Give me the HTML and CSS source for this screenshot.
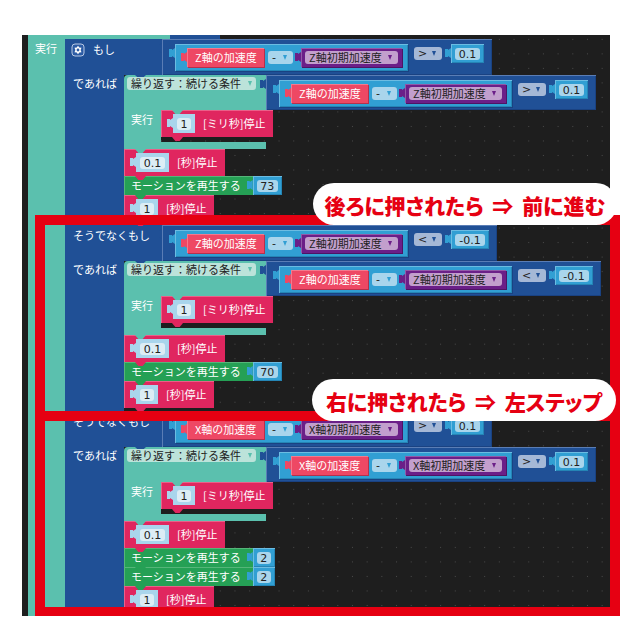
FILE: index.html
```
<!DOCTYPE html>
<html lang="ja">
<head>
<meta charset="UTF-8">
<meta name="viewport" content="width=device-width, initial-scale=1.0">
<title>押されたら動くプログラム</title>
<link rel="stylesheet" href="styles.css">
</head>
<body>
<main class="workspace">
    <div class="program">
        <div class="rail">実行</div>
        <div class="branches">
            <div class="previous"></div>

            <!-- もし -->
            <section class="branch">
                <div class="branch-head">
                    <div class="branch-label">
                        <button class="gear" aria-label="設定">
                            <svg viewBox="0 0 14 14" width="14" height="14">
                                <rect x="1" y="1" width="12" height="12" rx="3" fill="#2c5ca5" stroke="#b9c9e4"/>
                                <path d="M7 2.8L8.3 4.6L10.5 4.8L9.6 7L10.5 9.2L8.3 9.4L7 11.2L5.7 9.4L3.5 9.2L4.4 7L3.5 4.8L5.7 4.6Z" fill="#fff"/>
                                <circle cx="7" cy="7" r="1.4" fill="#2c5ca5"/>
                            </svg>
                        </button>
                        <span>もし</span>
                    </div>
                    <div class="compare">
                        <div class="math">
                            <div class="getter">Z軸の加速度</div>
                            <span class="drop drop-math"><select aria-label="演算"><option>-</option></select></span>
                            <div class="variable"><span class="drop drop-var"><select aria-label="変数"><option>Z軸初期加速度</option></select></span></div>
                        </div>
                        <span class="drop drop-logic"><select aria-label="比較"><option>&gt;</option></select></span>
                        <div class="number"><input class="w3" value="0.1" aria-label="数値"></div>
                    </div>
                </div>
                <div class="branch-body">
                    <div class="branch-label">であれば</div>
                    <div class="stack">
                        <div class="loop">
                            <div class="loop-head">
                                <div class="loop-title"><span class="drop drop-loop"><select aria-label="繰り返し"><option>繰り返す：続ける条件</option></select></span></div>
                                <div class="compare">
                                    <div class="math">
                                        <div class="getter">Z軸の加速度</div>
                                        <span class="drop drop-math"><select aria-label="演算"><option>-</option></select></span>
                                        <div class="variable"><span class="drop drop-var"><select aria-label="変数"><option>Z軸初期加速度</option></select></span></div>
                                    </div>
                                    <span class="drop drop-logic"><select aria-label="比較"><option>&gt;</option></select></span>
                                    <div class="number"><input class="w3" value="0.1" aria-label="数値"></div>
                                </div>
                            </div>
                            <div class="loop-body">
                                <div class="loop-label">実行</div>
                                <div class="stop"><div class="time"><input class="w1" value="1" aria-label="ミリ秒"></div>[ミリ秒]停止</div>
                            </div>
                            <div class="loop-foot"></div>
                        </div>
                        <div class="stop"><div class="time"><input class="w3" value="0.1" aria-label="秒"></div>[秒]停止</div>
                        <div class="motion">モーションを再生する<div class="number"><input class="w2" value="73" aria-label="モーション番号"></div></div>
                        <div class="stop"><div class="time"><input class="w1" value="1" aria-label="秒"></div>[秒]停止</div>
                    </div>
                </div>
            </section>

            <!-- 後ろに押されたら -->
            <section class="branch">
                <div class="branch-head">
                    <div class="branch-label">そうでなくもし</div>
                    <div class="compare">
                        <div class="math">
                            <div class="getter">Z軸の加速度</div>
                            <span class="drop drop-math"><select aria-label="演算"><option>-</option></select></span>
                            <div class="variable"><span class="drop drop-var"><select aria-label="変数"><option>Z軸初期加速度</option></select></span></div>
                        </div>
                        <span class="drop drop-logic"><select aria-label="比較"><option>&lt;</option></select></span>
                        <div class="number"><input class="w4" value="-0.1" aria-label="数値"></div>
                    </div>
                </div>
                <div class="branch-body">
                    <div class="branch-label">であれば</div>
                    <div class="stack">
                        <div class="loop">
                            <div class="loop-head">
                                <div class="loop-title"><span class="drop drop-loop"><select aria-label="繰り返し"><option>繰り返す：続ける条件</option></select></span></div>
                                <div class="compare">
                                    <div class="math">
                                        <div class="getter">Z軸の加速度</div>
                                        <span class="drop drop-math"><select aria-label="演算"><option>-</option></select></span>
                                        <div class="variable"><span class="drop drop-var"><select aria-label="変数"><option>Z軸初期加速度</option></select></span></div>
                                    </div>
                                    <span class="drop drop-logic"><select aria-label="比較"><option>&lt;</option></select></span>
                                    <div class="number"><input class="w4" value="-0.1" aria-label="数値"></div>
                                </div>
                            </div>
                            <div class="loop-body">
                                <div class="loop-label">実行</div>
                                <div class="stop"><div class="time"><input class="w1" value="1" aria-label="ミリ秒"></div>[ミリ秒]停止</div>
                            </div>
                            <div class="loop-foot"></div>
                        </div>
                        <div class="stop"><div class="time"><input class="w3" value="0.1" aria-label="秒"></div>[秒]停止</div>
                        <div class="motion">モーションを再生する<div class="number"><input class="w2" value="70" aria-label="モーション番号"></div></div>
                        <div class="stop"><div class="time"><input class="w1" value="1" aria-label="秒"></div>[秒]停止</div>
                    </div>
                </div>
            </section>

            <!-- 右に押されたら -->
            <section class="branch">
                <div class="branch-head">
                    <div class="branch-label">そうでなくもし</div>
                    <div class="compare">
                        <div class="math">
                            <div class="getter">X軸の加速度</div>
                            <span class="drop drop-math"><select aria-label="演算"><option>-</option></select></span>
                            <div class="variable"><span class="drop drop-var"><select aria-label="変数"><option>X軸初期加速度</option></select></span></div>
                        </div>
                        <span class="drop drop-logic"><select aria-label="比較"><option>&gt;</option></select></span>
                        <div class="number"><input class="w3" value="0.1" aria-label="数値"></div>
                    </div>
                </div>
                <div class="branch-body">
                    <div class="branch-label">であれば</div>
                    <div class="stack">
                        <div class="loop">
                            <div class="loop-head">
                                <div class="loop-title"><span class="drop drop-loop"><select aria-label="繰り返し"><option>繰り返す：続ける条件</option></select></span></div>
                                <div class="compare">
                                    <div class="math">
                                        <div class="getter">X軸の加速度</div>
                                        <span class="drop drop-math"><select aria-label="演算"><option>-</option></select></span>
                                        <div class="variable"><span class="drop drop-var"><select aria-label="変数"><option>X軸初期加速度</option></select></span></div>
                                    </div>
                                    <span class="drop drop-logic"><select aria-label="比較"><option>&gt;</option></select></span>
                                    <div class="number"><input class="w3" value="0.1" aria-label="数値"></div>
                                </div>
                            </div>
                            <div class="loop-body">
                                <div class="loop-label">実行</div>
                                <div class="stop"><div class="time"><input class="w1" value="1" aria-label="ミリ秒"></div>[ミリ秒]停止</div>
                            </div>
                            <div class="loop-foot"></div>
                        </div>
                        <div class="stop"><div class="time"><input class="w3" value="0.1" aria-label="秒"></div>[秒]停止</div>
                        <div class="motion">モーションを再生する<div class="number"><input class="w1" value="2" aria-label="モーション番号"></div></div>
                        <div class="motion">モーションを再生する<div class="number"><input class="w1" value="2" aria-label="モーション番号"></div></div>
                        <div class="stop"><div class="time"><input class="w1" value="1" aria-label="秒"></div>[秒]停止</div>
                    </div>
                </div>
            </section>
        </div>
    </div>

    <div class="frame frame-back"></div>
    <div class="frame frame-right"></div>
    <p class="callout callout-back">後ろに押されたら <span>⇒</span> 前に進む</p>
    <p class="callout callout-right">右に押されたら <span>⇒</span> 左ステップ</p>
</main>
</body>
</html>
```

FILE: styles.css
```
* {
    box-sizing: border-box;
}
body {
    margin: 0;
    background: #fff;
    font-family: "Noto Sans CJK JP", sans-serif;
    font-size: 11px;
    line-height: 13px;
    color: #fff;
}
.workspace {
    position: relative;
    margin: 35px 10px 0 22px;
    background-color: #1e1e1e;
    background-image: radial-gradient(circle at 50% 30%, #4a4a4a 0, transparent 1px);
    background-size: 2.5% 2.5%;
}
.program {
    display: flex;
    padding-left: 6px;
    white-space: nowrap;
}
.rail {
    width: 37px;
    padding: 7px 0 0 7px;
    background: #5bc0ae;
}

/* if / else if */
.previous {
    width: 155px;
    height: 4px;
    background: linear-gradient(to right, #5bc0ae 105px, #205096 105px);
}
.branch {
    background: linear-gradient(to right, #205096 59px, transparent 59px);
}
.branch-head, .branch-body {
    display: flex;
}
.branch-head .branch-label {
    display: flex;
    gap: 8px;
    width: 97px;
    background: #205096;
    padding-top: 4px;
}
.branch-head .compare {
    height: 36px;
}
.branch-label {
    flex: none;
    width: 59px;
    padding: 2px 0 0 8px;
}
.gear {
    width: 14px;
    height: 14px;
    margin-left: -2px;
    padding: 0;
    border: none;
    background: none;
}
.gear svg {
    display: block;
}
.stack {
    padding-bottom: 3px;
}

/* value blocks, the tab sits on the left edge */
.compare, .math, .getter, .variable, .number, .time {
    position: relative;
    display: flex;
    align-items: flex-start;
}
.compare::before, .math::before, .getter::before, .variable::before, .number::before, .time::before {
    content: "";
    position: absolute;
    left: -6px;
    top: 4px;
    width: 6px;
    height: 10px;
    background: inherit;
    clip-path: polygon(0 10%, 50% 10%, 50% 20%, 100% 0, 100% 100%, 50% 80%, 50% 90%, 0 90%);
}
.compare {
    height: 35px;
    padding: 5px 8px 0 13px;
    background: #205096;
    box-shadow: inset 1px 1px #5a7db5, inset -1px -1px #1a4282;
}
.math {
    height: 27px;
    margin-right: 6px;
    padding: 4px 6px 0 12px;
    background: #319fd3;
    box-shadow: inset 1px 1px #6bbce2, inset -1px -1px #2585b5, 1px 1px #1a4282;
}
.getter {
    width: 77px;
    height: 19px;
    margin-right: 4px;
    padding: 3px 0 0 8px;
    background: #ee4864;
    box-shadow: inset 1px 1px #f4798d, 1px 1px #b5304c;
}
.variable {
    width: 101px;
    height: 19px;
    margin-left: 8px;
    padding: 3px 4px;
    background: #6b1f88;
    box-shadow: inset 1px 1px #9159a8, 1px 1px #4e1465;
}
.math .drop-math {
    margin-top: 3px;
}
.number, .time {
    height: 19px;
    padding: 4px;
    background: #319fd3;
    box-shadow: inset 1px 1px #6bbce2, inset -1px -1px #2585b5;
}
.compare > .number {
    margin-left: 9px;
}
.time {
    margin-right: 8px;
    background: #a9d5ec;
    box-shadow: none;
}
input {
    height: 12px;
    padding: 0;
    border: none;
    border-radius: 3px;
    background: #a9d5ec;
    color: #222;
    font: 11px "DejaVu Sans", sans-serif;
    text-align: center;
}
.time input {
    background: #dcedf5;
}
.w1 {
    width: 14px;
}
.w2 {
    width: 21px;
}
.w3 {
    width: 25px;
}
.w4 {
    width: 30px;
}

/* drop-downs */
.drop {
    position: relative;
    display: block;
    height: 13px;
}
.drop::after {
    content: "";
    position: absolute;
    right: 6px;
    top: 4px;
    width: 4px;
    height: 5px;
    background: #205096;
    clip-path: polygon(0 0, 100% 0, 50% 100%);
    pointer-events: none;
}
select {
    display: block;
    appearance: none;
    width: 100%;
    height: 13px;
    padding: 0 0 0 4px;
    border: none;
    border-radius: 3px;
    background: #a5b8d6;
    color: #222;
    font: 11px/13px "Noto Sans CJK JP", sans-serif;
}
.drop-logic {
    width: 28px;
    margin-top: 3px;
}
.drop-math {
    width: 25px;
}
.drop-logic select, .drop-math select {
    font-family: "DejaVu Sans", sans-serif;
}
.drop-math select {
    background: #a9d5ec;
}
.drop-math::after {
    background: #319fd3;
}
.drop-var {
    width: 93px;
}
.drop-var select {
    background: #c29fcd;
}
.drop-var::after {
    background: #6b1f88;
}
.drop-loop {
    width: 129px;
}
.drop-loop select {
    background: #bce3da;
}
.drop-loop::after {
    right: 4px;
    background: #5bc0ae;
}

/* statement blocks, the tab hangs from the bottom edge */
.stop, .motion, .loop-foot {
    position: relative;
}
.stop::after, .motion::after, .loop-foot::after, .loop-title::before, .loop-label::after {
    content: "";
    position: absolute;
    z-index: 1;
    left: 11px;
    top: 100%;
    width: 11px;
    height: 4px;
    background: inherit;
    clip-path: polygon(0 0, 100% 0, 70% 100%, 30% 100%);
}
.loop-title {
    position: relative;
    width: 142px;
    padding: 2px 3px;
    border-top-left-radius: 4px;
    background: #5bc0ae;
}
.loop-title::before {
    z-index: 0;
    top: 0;
    height: 3px;
    background: #205096;
}
.loop-head, .loop-body {
    display: flex;
}
.loop-body {
    height: 32px;
}
.loop-label {
    position: relative;
    width: 37px;
    padding: 3px 0 0 7px;
    background: #5bc0ae;
}
.loop-label::after {
    left: 48px;
    top: 0;
}
.loop-foot {
    width: 142px;
    height: 7px;
    background: #5bc0ae;
}
.stop {
    display: flex;
    width: max-content;
    height: 27px;
    padding: 4px 8px 0 12px;
    background: #e0265f;
    box-shadow: inset 1px 1px #ea6089;
    line-height: 19px;
}
.motion {
    display: flex;
    width: max-content;
    padding-left: 7px;
    background: #25a055;
    box-shadow: inset 1px 1px #55b679;
    line-height: 19px;
}
.motion .number {
    margin-left: 12px;
}

/* red marks over the program */
.frame {
    position: absolute;
    z-index: 2;
    left: 13px;
    right: -10px;
    height: 206px;
    border: 10px solid #e60012;
}
.frame-back {
    top: 180px;
}
.frame-right {
    top: 376px;
}
.callout {
    position: absolute;
    z-index: 3;
    width: 304px;
    height: 42px;
    margin: 0;
    border-radius: 21px;
    background: #fff;
    color: #e60012;
    font-size: 21px;
    font-weight: 900;
    font-feature-settings: "palt";
    line-height: 44px;
    text-align: center;
    white-space: nowrap;
}
.callout span {
    margin: 0 4px;
}
.callout-back {
    top: 148px;
    right: -7px;
}
.callout-right {
    top: 344px;
    right: -6px;
}
```
